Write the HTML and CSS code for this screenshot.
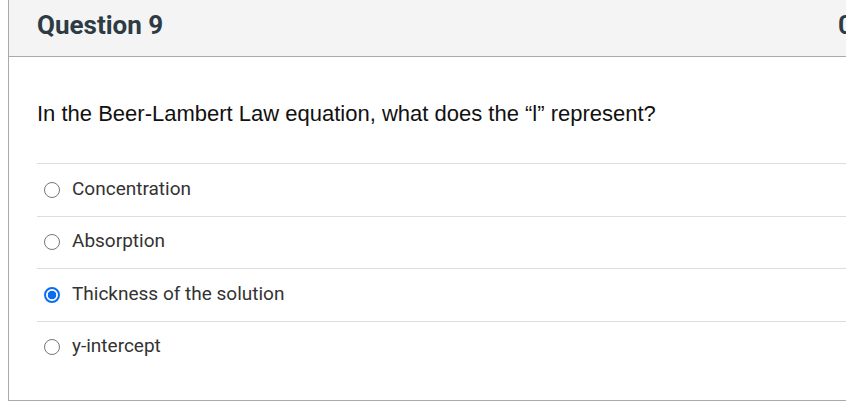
FILE: index.html
```html
<!DOCTYPE html>
<html lang="en">
<head>
<meta charset="utf-8">
<title>Question 9</title>
<link rel="stylesheet" href="styles.css">
</head>
<body>
<div class="card">
  <div class="header">
    <h2 class="title">Question 9</h2>
    <span class="points">0 / 1 pts</span>
  </div>
  <div class="body">
    <p class="question">In the Beer-Lambert Law equation, what does the “l” represent?</p>
    <ul class="answers">
      <li class="answer"><span class="radio"></span><span class="label">Concentration</span></li>
      <li class="answer"><span class="radio"></span><span class="label">Absorption</span></li>
      <li class="answer"><span class="radio checked"></span><span class="label">Thickness of the solution</span></li>
      <li class="answer"><span class="radio"></span><span class="label">y-intercept</span></li>
    </ul>
  </div>
</div>
</body>
</html>
```

FILE: styles.css
```css
html, body {
  margin: 0;
  padding: 0;
  background: #fff;
  overflow: hidden;
}
body {
  padding-left: 8px;
  font-family: Roboto, "Liberation Sans", sans-serif;
}
.card {
  width: 1000px;
  border-left: 1px solid #aaaaaa;
  border-bottom: 1px solid #aaaaaa;
}
.header {
  height: 56px;
  background: #f4f4f4;
  border-bottom: 1px solid #aaaaaa;
  display: grid;
  grid-template-columns: 801px auto;
  align-items: center;
  padding-left: 28px;
}
.title,
.points {
  margin: 0;
  font-family: Roboto, sans-serif;
  font-weight: 700;
  font-size: 26px;
  line-height: 30px;
  color: #2d3b45;
  padding-bottom: 7px;
}
.body {
  padding: 43px 0 27px 28px;
}
.question {
  margin: 0 0 35px;
  font-family: "Liberation Sans", Arial, sans-serif;
  font-size: 22px;
  line-height: 28px;
  color: #111;
}
.answers {
  list-style: none;
  margin: 0;
  padding: 0;
}
.answer {
  display: flex;
  align-items: center;
  height: 51.5px;
  border-top: 1px solid #dddddd;
  padding-left: 7px;
  gap: 12px;
}
.radio {
  box-sizing: border-box;
  width: 16px;
  height: 16px;
  border-radius: 50%;
  border: 1.5px solid #767676;
  background: #fff;
  flex: none;
}
.radio.checked {
  border: 2px solid #0b6ef0;
  background: radial-gradient(circle, #0b6ef0 0 4px, #fff 4.6px);
}
.label {
  font-size: 19px;
  line-height: 24px;
  color: #333;
  padding-bottom: 2px;
}
```
